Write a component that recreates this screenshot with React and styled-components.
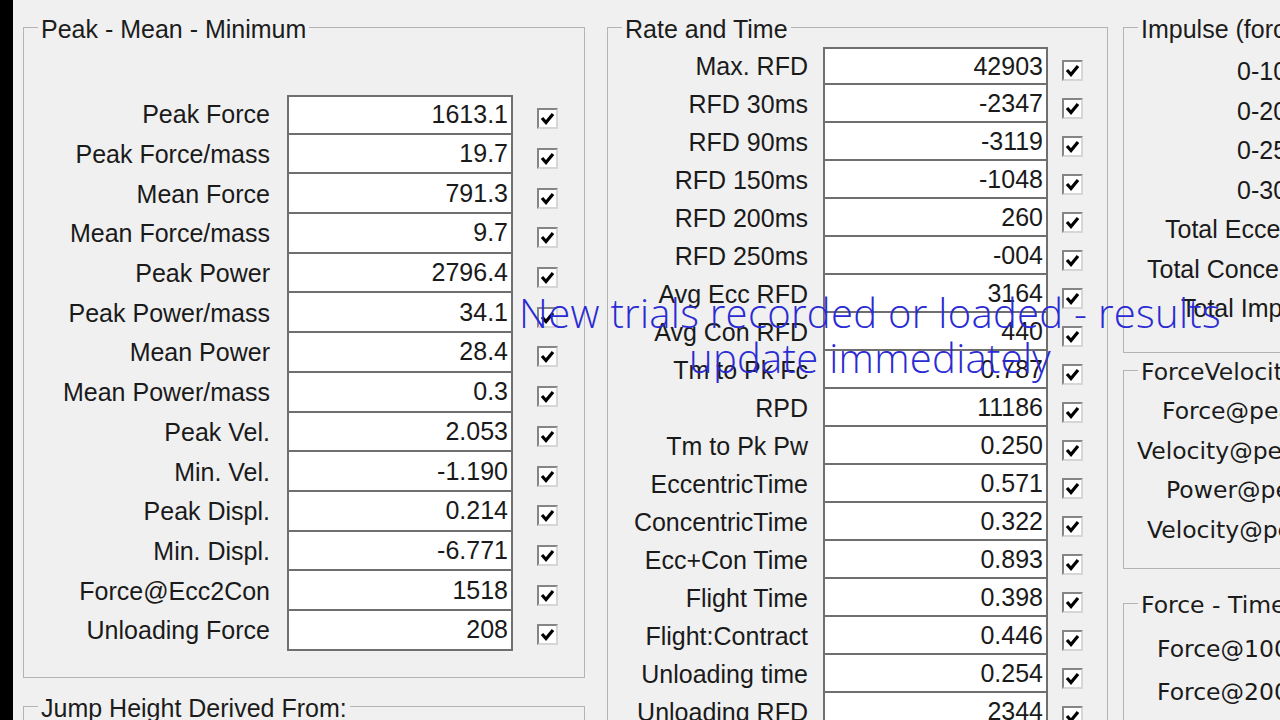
import React from "react";
import styled, { createGlobalStyle } from "styled-components";

const GlobalStyle = createGlobalStyle`
  html, body {
    margin: 0;
    padding: 0;
    background: #f0f0f0;
    overflow: hidden;
  }
  body {
    font-family: "Liberation Sans", Arial, sans-serif;
    color: #1c1c1c;
  }
`;

const Page = styled.div`
  position: relative;
  display: flex;
  width: 1280px;
  height: 720px;
  overflow: hidden;
  background: #f0f0f0;
`;

const Strip = styled.div`
  flex-shrink: 0;
  width: 13px;
  background: #000;
`;

const Column = styled.div`
  flex-shrink: 0;
  display: flex;
  flex-direction: column;
  width: ${(p) => p.$w}px;
  margin-left: ${(p) => p.$ml}px;
  padding-top: 12px;
`;

const Group = styled.fieldset`
  margin: 0;
  margin-top: ${(p) => p.$mt || 0}px;
  padding: 0;
  min-width: 0;
  box-sizing: border-box;
  height: ${(p) => p.$h}px;
  flex-shrink: 0;
  border: 1px solid #b4b4b4;
  font-family: ${(p) =>
    p.$wide ? '"DejaVu Sans", Verdana, sans-serif' : '"Liberation Sans", Arial, sans-serif'};
`;

const Legend = styled.legend`
  margin-left: 14px;
  padding: 4px 3px 0;
  font-size: ${(p) => (p.$wide ? 23.5 : 25)}px;
  line-height: 26px;
  white-space: nowrap;
  color: #1c1c1c;
`;

const Rows = styled.div`
  margin-top: ${(p) => p.$mt}px;
`;

const Row = styled.div`
  display: flex;
  align-items: center;
  height: ${(p) => p.$h}px;
`;

const Label = styled.div`
  flex-shrink: 0;
  width: ${(p) => p.$w}px;
  text-align: right;
  font-size: 25px;
  white-space: nowrap;
  color: #1a1a1a;
`;

const FreeLabel = styled.div`
  padding-left: ${(p) => p.$indent}px;
  font-size: ${(p) => (p.$wide ? 23.5 : 25)}px;
  white-space: nowrap;
  color: #1a1a1a;
`;

const ValueBox = styled.div`
  flex-shrink: 0;
  box-sizing: border-box;
  display: flex;
  align-items: center;
  justify-content: flex-end;
  width: ${(p) => p.$w}px;
  height: 100%;
  margin-left: ${(p) => p.$ml}px;
  padding-right: 3px;
  background: #fff;
  border: 2px solid #6f6f6f;
  border-top-width: ${(p) => (p.$first ? 2 : 0)}px;
  font-size: 25px;
  color: #1a1a1a;
`;

const Check = styled.div`
  flex-shrink: 0;
  box-sizing: border-box;
  width: 21px;
  height: 21px;
  margin-left: ${(p) => p.$ml}px;
  margin-top: 8px;
  background: #fff;
  border-top: 2px solid #858585;
  border-left: 2px solid #858585;
  border-right: 2px solid #d6d6d6;
  border-bottom: 2px solid #d6d6d6;
  display: flex;
  align-items: center;
  justify-content: center;
`;

const Overlay = styled.div`
  position: absolute;
  left: 370px;
  top: 290px;
  width: 1000px;
  text-align: center;
  font-family: "Open Sans", Lato, sans-serif;
  font-weight: 300;
  font-size: 40px;
  letter-spacing: 0.3px;
  line-height: 45px;
  color: #2b2bd4;
  pointer-events: none;
`;

const Tick = () => (
  <svg width="17" height="17" viewBox="0 0 17 17">
    <path d="M3 8 L7 12.5 L14 4" fill="none" stroke="#000" strokeWidth="3.2" />
  </svg>
);

const peakRows = [
  ["Peak Force", "1613.1"],
  ["Peak Force/mass", "19.7"],
  ["Mean Force", "791.3"],
  ["Mean Force/mass", "9.7"],
  ["Peak Power", "2796.4"],
  ["Peak Power/mass", "34.1"],
  ["Mean Power", "28.4"],
  ["Mean Power/mass", "0.3"],
  ["Peak Vel.", "2.053"],
  ["Min. Vel.", "-1.190"],
  ["Peak Displ.", "0.214"],
  ["Min. Displ.", "-6.771"],
  ["Force@Ecc2Con", "1518"],
  ["Unloading Force", "208"],
];

const rateRows = [
  ["Max. RFD", "42903"],
  ["RFD 30ms", "-2347"],
  ["RFD 90ms", "-3119"],
  ["RFD 150ms", "-1048"],
  ["RFD 200ms", "260"],
  ["RFD 250ms", "-004"],
  ["Avg Ecc RFD", "3164"],
  ["Avg Con RFD", "440"],
  ["Tm to Pk Fc", "0.787"],
  ["RPD", "11186"],
  ["Tm to Pk Pw", "0.250"],
  ["EccentricTime", "0.571"],
  ["ConcentricTime", "0.322"],
  ["Ecc+Con Time", "0.893"],
  ["Flight Time", "0.398"],
  ["Flight:Contract", "0.446"],
  ["Unloading time", "0.254"],
  ["Unloading RFD", "2344"],
];

const impulseRows = [
  ["0-100ms", 113],
  ["0-200ms", 113],
  ["0-250ms", 113],
  ["0-300ms", 113],
  ["Total Eccentric", 41],
  ["Total Concentric", 23],
  ["Total Impulse", 57],
];

const fvRows = [
  ["Force@peak Power", 38],
  ["Velocity@peak Power", 13],
  ["Power@peak Velocity", 42],
  ["Velocity@peak Force", 23],
];

const ftRows = [
  ["Force@100ms", 33],
  ["Force@200ms", 33],
];

const ResultTable = ({ rows, rowH, labelW, boxGap, boxW, checkGap }) =>
  rows.map(([label, value], i) => (
    <Row key={label} $h={rowH}>
      <Label $w={labelW}>{label}</Label>
      <ValueBox $w={boxW} $ml={boxGap} $first={i === 0}>
        {value}
      </ValueBox>
      <Check $ml={checkGap}>
        <Tick />
      </Check>
    </Row>
  ));

const App = () => {
  return (
    <Page>
      <GlobalStyle />
      <Strip />
      <Column $w={562} $ml={10}>
        <Group $h={666}>
          <Legend>Peak - Mean - Minimum</Legend>
          <Rows $mt={53}>
            <ResultTable
              rows={peakRows}
              rowH={39.7}
              labelW={246}
              boxGap={17}
              boxW={226}
              checkGap={24}
            />
          </Rows>
        </Group>
        <Group $h={200} $mt={13}>
          <Legend>Jump Height Derived From:</Legend>
        </Group>
      </Column>
      <Column $w={501} $ml={22}>
        <Group $h={760}>
          <Legend>Rate and Time</Legend>
          <Rows $mt={5}>
            <ResultTable
              rows={rateRows}
              rowH={38}
              labelW={200}
              boxGap={15}
              boxW={225}
              checkGap={14}
            />
          </Rows>
        </Group>
      </Column>
      <Column $w={320} $ml={15}>
        <Group $h={341}>
          <Legend>Impulse (force x time)</Legend>
          <Rows $mt={10}>
            {impulseRows.map(([label, indent]) => (
              <Row key={label} $h={39.5}>
                <FreeLabel $indent={indent}>{label}</FreeLabel>
              </Row>
            ))}
          </Rows>
        </Group>
        <Group $h={214} $mt={2} $wide>
          <Legend $wide>ForceVelocity Profile</Legend>
          <Rows $mt={6}>
            {fvRows.map(([label, indent]) => (
              <Row key={label} $h={39.7}>
                <FreeLabel $indent={indent} $wide>
                  {label}
                </FreeLabel>
              </Row>
            ))}
          </Rows>
        </Group>
        <Group $h={200} $mt={19} $wide>
          <Legend $wide>Force - Time</Legend>
          <Rows $mt={9}>
            {ftRows.map(([label, indent]) => (
              <Row key={label} $h={43}>
                <FreeLabel $indent={indent} $wide>
                  {label}
                </FreeLabel>
              </Row>
            ))}
          </Rows>
        </Group>
      </Column>
      <Overlay>
        New trials recorded or loaded - results
        <br />
        update immediately
      </Overlay>
    </Page>
  );
};

export default App;
